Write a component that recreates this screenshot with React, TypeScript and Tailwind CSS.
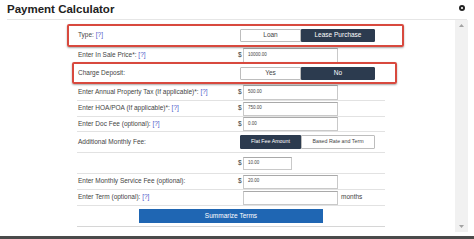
import type { ReactNode } from 'react';

const font = { fontFamily: '"Liberation Sans", Arial, sans-serif' };

function Help() {
  return <span className="text-[#4a55c8]">[?]</span>;
}

function Toggle({ left, right, active, small }: { left: string; right: string; active: 'left' | 'right'; small?: boolean }) {
  const on = 'bg-[#2c3b4f] text-white border-[#2c3b4f]';
  const off = 'bg-white text-[#444] border-[#bdbdbd]';
  return (
    <div className={`ml-[2px] flex w-[135px] leading-none ${small ? 'h-[14px] text-[5.3px]' : 'h-[13px] text-[6.5px]'}`}>
      <div className={`flex w-[61px] items-center justify-center rounded-l-[1px] border ${active === 'left' ? on : off}`}>
        {left}
      </div>
      <div className={`flex flex-1 items-center justify-center rounded-r-[1px] border ${active === 'right' ? on : off}`}>
        {right}
      </div>
    </div>
  );
}

function Money({ value, w = 'w-[95px]', h = 'h-[15px]' }: { value: string; w?: string; h?: string }) {
  return (
    <div className="flex items-center">
      <span className="w-[5px] text-[6.5px] leading-none text-[#333]">$</span>
      <div className={`${w} ${h} flex items-center border border-[#c9c9c9] border-t-[#a9a9a9] bg-white pl-[4px] text-[4.5px] leading-none text-[#444]`}>
        {value}
      </div>
    </div>
  );
}

function Row({ h, label, children }: { h: string; label?: ReactNode; children?: ReactNode }) {
  return (
    <div className={`${h} flex items-center border-b border-[#e2e2e2]`}>
      <div className="w-[161px] pl-[1px] text-[6.5px] leading-none text-[#444]">{label}</div>
      <div className="flex flex-1 items-center">{children}</div>
    </div>
  );
}

export default function App() {
  return (
    <div className="relative flex h-[239px] w-[474px] flex-col overflow-hidden bg-white" style={font}>
      <div className="mx-[7px] flex h-[20px] items-start justify-between border-b border-[#e6e6e6]">
        <h1 className="mt-[4px] text-[11.5px] font-bold leading-none text-[#222]">Payment Calculator</h1>
        <svg className="mt-[5px] mr-[2px]" width="6" height="6" viewBox="0 0 6 6">
          <circle cx="3" cy="3" r="3" fill="#222" />
          <circle cx="3" cy="3" r="1.1" fill="#fff" />
        </svg>
      </div>

      <div className="flex flex-1">
        <div className="flex-1 pt-[5px]">
          <div className="ml-[77px] w-[308px]">
            <Row h="h-[22px]" label={<>Type: <Help /></>}>
              <Toggle left="Loan" right="Lease Purchase" active="right" />
            </Row>
            <Row h="h-[17px]" label={<>Enter In Sale Price*: <Help /></>}>
              <Money value="10000.00" />
            </Row>
            <Row h="h-[20px]" label="Charge Deposit:">
              <Toggle left="Yes" right="No" active="right" />
            </Row>
            <Row h="h-[17px]" label={<>Enter Annual Property Tax (If applicable)*: <Help /></>}>
              <Money value="500.00" />
            </Row>
            <Row h="h-[16px]" label={<>Enter HOA/POA (If applicable)*: <Help /></>}>
              <Money value="750.00" h="h-[14px]" />
            </Row>
            <Row h="h-[15px]" label={<>Enter Doc Fee (optional): <Help /></>}>
              <Money value="0.00" h="h-[14px]" />
            </Row>
            <Row h="h-[21px]" label="Additional Monthly Fee:">
              <Toggle left="Flat Fee Amount" right="Based Rate and Term" active="left" small />
            </Row>
            <Row h="h-[21px]">
              <Money value="10.00" w="w-[49px]" h="h-[13px]" />
            </Row>
            <Row h="h-[16px]" label="Enter Monthly Service Fee (optional):">
              <Money value="20.00" h="h-[14px]" />
            </Row>
            <Row h="h-[16px]" label={<>Enter Term (optional): <Help /></>}>
              <div className="ml-[5px] h-[14px] w-[95px] border border-[#c9c9c9] border-t-[#a9a9a9] bg-white" />
              <span className="ml-[3px] text-[6.5px] leading-none text-[#444]">months</span>
            </Row>
            <div className="flex h-[21px] items-center border-b border-[#d6d6d6]">
              <button className="ml-[62px] h-[14px] w-[184px] bg-[#1f66b3] text-[6.5px] leading-none text-white">
                Summarize Terms
              </button>
            </div>
          </div>
        </div>

        <div className="mr-[6px] mb-[4px] flex w-[13px] flex-col items-center justify-between bg-[#f1f1f1] py-[4px]">
          <svg width="5" height="3" viewBox="0 0 5 3"><path d="M0 3 L2.5 0 L5 3Z" fill="#a3a3a3" /></svg>
          <svg width="5" height="3" viewBox="0 0 5 3"><path d="M0 0 L2.5 3 L5 0Z" fill="#a3a3a3" /></svg>
        </div>
      </div>

      <div className="h-[3px] bg-[#4a4a4a]" />

      <div className="pointer-events-none absolute left-[67px] top-[24px] h-[23px] w-[337px] rounded-[2px] border-2 border-[#d8493e] shadow-[0_1px_2px_rgba(0,0,0,0.35)]" />
      <div className="pointer-events-none absolute left-[72px] top-[62px] h-[22px] w-[325px] rounded-[2px] border-2 border-[#d8493e] shadow-[0_1px_2px_rgba(0,0,0,0.35)]" />
    </div>
  );
}
